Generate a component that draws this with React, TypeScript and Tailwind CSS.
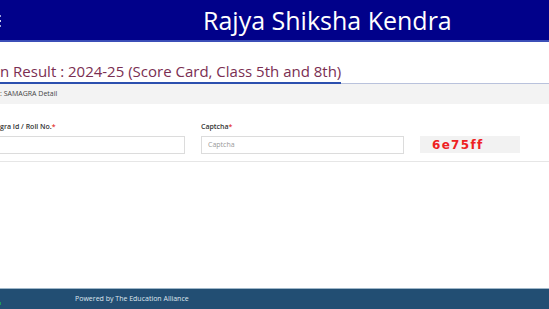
import React from "react"

export default function App() {
    return (
        <div className="flex flex-col h-[309px] w-[549px] overflow-hidden bg-white font-['Open_Sans',sans-serif]">
            {/* Header */}
            <div className="h-[42px] shrink-0 bg-[#01018a] border-b-2 border-[#3c4fb8] flex items-center relative">
                <div className="absolute left-0 top-[15px] flex flex-col gap-[3px]">
                    <span className="block w-[1px] h-[2px] bg-[#9aa0d8]" />
                    <span className="block w-[1px] h-[2px] bg-[#d0d3ee]" />
                    <span className="block w-[1px] h-[2px] bg-[#9aa0d8]" />
                </div>
                <div className="pl-[203px] text-white text-[25px] leading-none pt-[1px]">
                    Rajya Shiksha Kendra
                </div>
            </div>

            {/* Page title */}
            <div className="pt-[19px]">
                <div className="flex">
                    <div className="text-[15px] leading-[20px] text-[#7a2e52] border-b-2 border-[#2b4fae] pb-[1px]">
                        n Result : 2024-25 (Score Card, Class 5th and 8th)
                    </div>
                    <div className="flex-1 border-b border-[#b9c2dc]" />
                </div>

                {/* Section bar */}
                <div className="h-[20px] bg-[#f3f3f3] flex items-center text-[7px] text-[#444]">
                    : SAMAGRA Detail
                </div>
            </div>

            {/* Form */}
            <div className="pt-[18px] flex gap-[16px] border-b border-[#e6e6e6] pb-[7px]">
                <div className="w-[185px] flex flex-col">
                    <div className="text-[7px] font-semibold text-[#333] leading-[10px] mb-[4px]">
                        gra Id / Roll No.<span className="text-[#e53935]">*</span>
                    </div>
                    <div className="h-[18px] border border-[#dcdcdc] border-l-0 bg-white" />
                </div>
                <div className="w-[203px] flex flex-col">
                    <div className="text-[7px] font-semibold text-[#333] leading-[10px] mb-[4px]">
                        Captcha<span className="text-[#e53935]">*</span>
                    </div>
                    <div className="h-[18px] border border-[#dcdcdc] bg-white flex items-center pl-[6px] text-[7px] text-[#999]">
                        Captcha
                    </div>
                </div>
                <div className="flex flex-col justify-end">
                    <div className="w-[100px] h-[17px] bg-[#f2f2f2] flex items-center pl-[12px] font-['DejaVu_Sans',sans-serif] font-bold text-[12px] tracking-[1.3px] text-[#ee2222] mb-[1px]">
                        6e75ff
                    </div>
                </div>
            </div>

            <div className="flex-1" />

            {/* Footer */}
            <div className="h-[21px] shrink-0 bg-[#224e73] border-t border-[#9fb7c9] flex items-center pl-[75px] text-[7px] text-[#dfe6ee] relative">
                <span className="absolute left-0 top-[13px] w-[1px] h-[3px] bg-[#1c9a5a]" />
                Powered by The Education Alliance
            </div>
        </div>
    )
}
